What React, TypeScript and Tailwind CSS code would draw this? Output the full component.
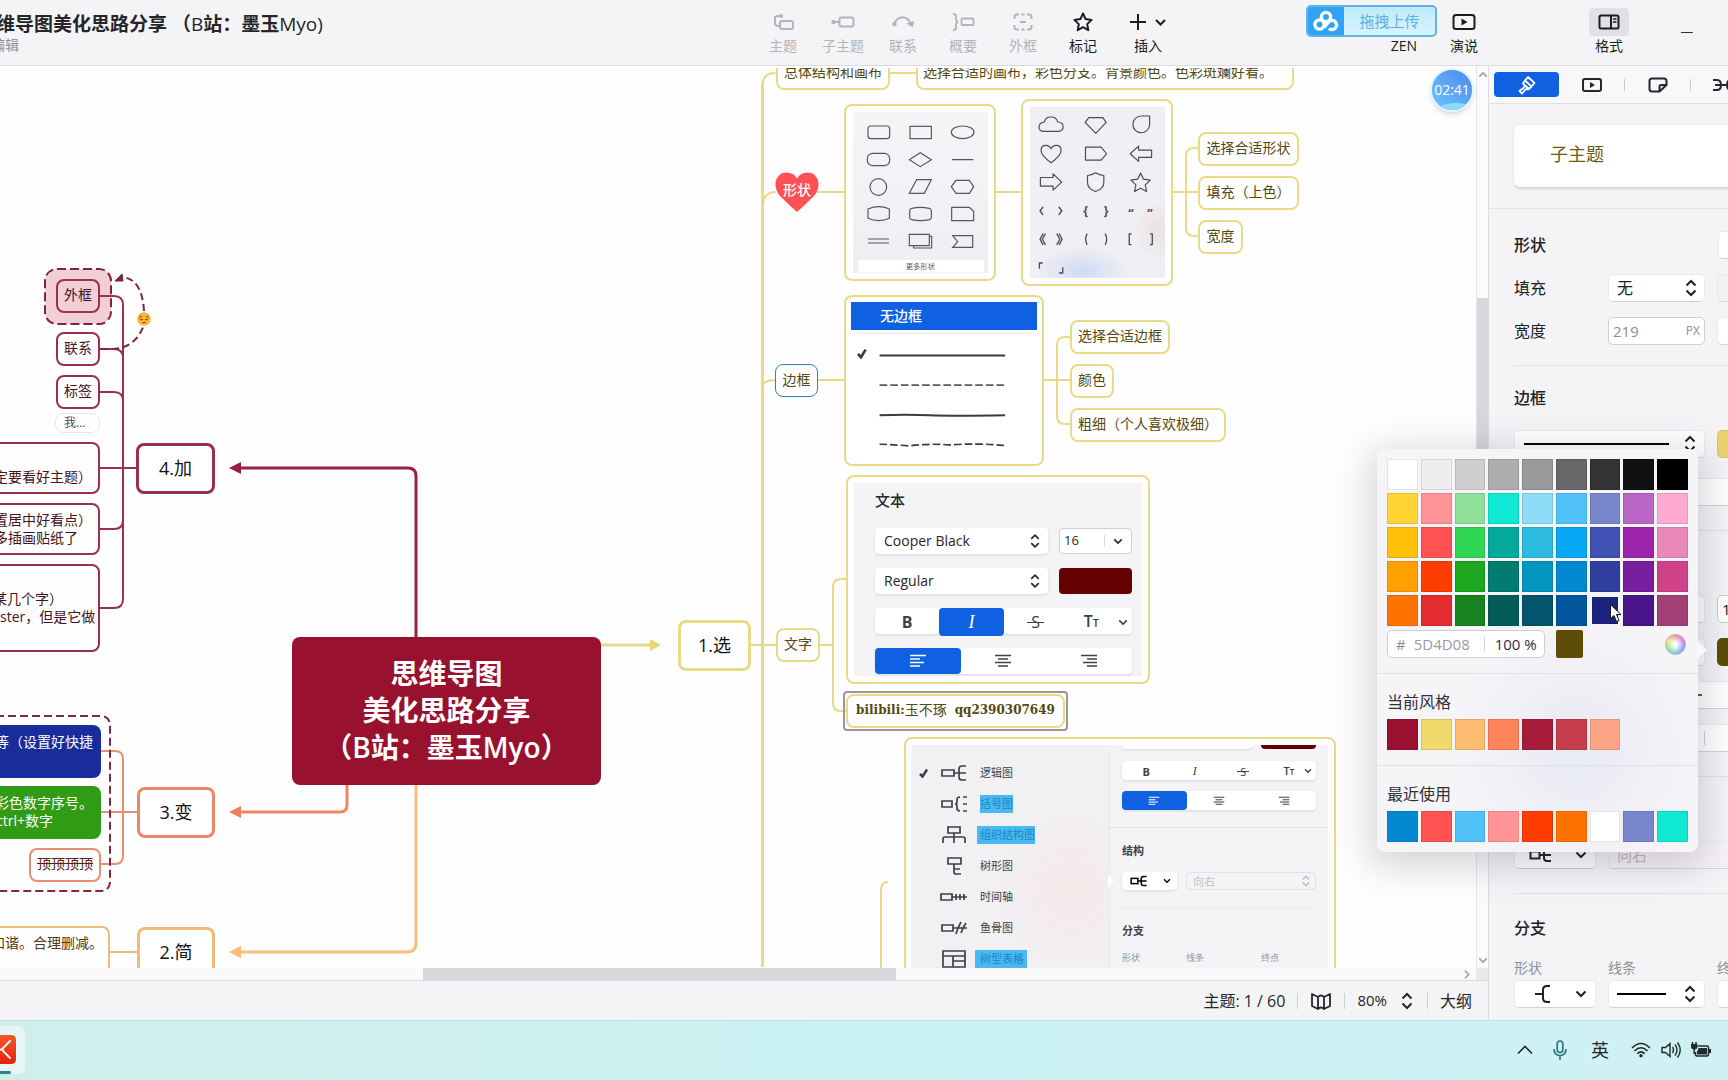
import type { ReactNode } from "react";
import clsx from "clsx";

type Props = {
  className?: string;
  children?: ReactNode;
};

const palette = [
  ["#ffffff", "#eeedf0", "#cfcfcf", "#aeaeae", "#99999b", "#68686a", "#333333", "#111113", "#000000"],
  ["#ffd535", "#ff9496", "#8fde9a", "#0fe8d2", "#8fdcf8", "#50c2f8", "#7a86cb", "#b966c7", "#ffaad3"],
  ["#ffc00a", "#ff5353", "#2fd755", "#02a99c", "#2dbbe0", "#07a8f6", "#3f51b3", "#9d25ae", "#ea89b9"],
  ["#ffa000", "#ff3d00", "#1da81f", "#027c70", "#0396c0", "#0388d2", "#303ea0", "#7a1ea0", "#d04288"],
  ["#ff7200", "#e32c30", "#17841f", "#045c5a", "#03546f", "#02579c", "#1a237e", "#4a148b", "#a43f78"],
];
const themeColors = ["#9a112f", "#f2d96c", "#ffbd72", "#ff8359", "#a61c39", "#c63d4e", "#ffa587"];
const recentColors = ["#0388d2", "#ff5353", "#50c2f8", "#ff9496", "#ff3d00", "#ff7200", "#ffffff", "#7a86cb", "#0fe8d2"];

/* ---------- small icons ---------- */

const Down = ({ className = "w-3 h-2" }: Props) => (
  <svg viewBox="0 0 12 8" className={className} fill="none" stroke="currentColor" strokeWidth="2">
    <path d="M1.5 1.5 6 6l4.5-4.5" />
  </svg>
);

const UpDown = ({ className = "w-3 h-[18px]" }: Props) => (
  <svg viewBox="0 0 12 18" className={className} fill="none" stroke="currentColor" strokeWidth="2">
    <path d="M1.5 6.5 6 2l4.5 4.5M1.5 11.5 6 16l4.5-4.5" />
  </svg>
);

const PlayBox = () => (
  <svg viewBox="0 0 24 18" className="w-6 h-[18px]" fill="none" stroke="currentColor" strokeWidth="2">
    <rect x="1.5" y="2" width="21" height="14" rx="2.5" />
    <path d="M9.5 5.5v7l6-3.5z" fill="currentColor" stroke="none" />
  </svg>
);

const AlignIcon = ({ side, small }: { side: "left" | "center" | "right"; small?: boolean }) => {
  const lines = {
    left: "M1 1.5h16M1 5h10M1 8.500h14M1 12h10",
    center: "M1 1.500h16M4 5h10M1 8.500h16M4 12h10",
    right: "M1 1.500h16M7 5h10M3 8.500h14M7 12h10",
  };
  return (
    <svg viewBox="0 0 18 14" className={small ? "w-3 h-[10px]" : "w-[18px] h-[14px]"} stroke="currentColor" strokeWidth="1.6">
      <path d={lines[side]} />
    </svg>
  );
};

/* logic chart glyph: a box and three branches */
const LogicIcon = ({ className = "w-6 h-4" }: Props) => (
  <svg viewBox="0 0 24 16" className={className} fill="none" stroke="currentColor" strokeWidth="2">
    <rect x="1.500" y="4.500" width="9" height="7" />
    <path d="M10.500 8H22M22 2h-4q-3 0-3 3v6q0 3 3 3h4" />
  </svg>
);

/* ---------- header ---------- */

type ToolProps = {
  label: string;
  muted?: boolean;
  wide?: boolean;
  className?: string;
  children?: ReactNode;
};

const Tool = (props: ToolProps) => (
  <button
    className={clsx(
      "flex flex-col items-center shrink-0 pt-2",
      props.wide ? "w-[70px]" : "w-15",
      props.muted ? "text-[#b4b3b9]" : "text-[#1c1c20]",
      props.className
    )}
  >
    <span className="h-7 flex items-center justify-center">{props.children}</span>
    <span className="text-sm leading-5 h-5">{props.label}</span>
  </button>
);

const toolSvg = "w-6 h-[22px]";

const Header = () => (
  <header className="h-[66px] shrink-0 flex bg-[#f4f4f7] border-b border-[#dddde1] overflow-hidden">
    <div className="flex-1 min-w-0 whitespace-nowrap pt-[11px] -indent-[23px]">
      <h1 className="text-[19px] leading-[26px] font-bold text-[#25252a]">
        思维导图美化思路分享 （<span className="font-medium">B</span>站：墨玉<span className="font-medium">Myo)</span>
      </h1>
      <p className="text-sm leading-4 text-[#8f8f96]">已编辑</p>
    </div>

    <Tool label="主题" muted>
      <svg viewBox="0 0 24 22" className={toolSvg} fill="none" stroke="currentColor" strokeWidth="2">
        <rect x="9" y="10" width="13" height="8" rx="2" />
        <path d="M9 15H7q-3 0-3-3V7q0-2 3-2h2" />
        <circle cx="10" cy="5" r="2" fill="currentColor" stroke="none" />
      </svg>
    </Tool>
    <Tool label="子主题" muted>
      <svg viewBox="0 0 24 22" className={toolSvg} fill="none" stroke="currentColor" strokeWidth="2">
        <rect x="8.500" y="6.500" width="14" height="9" rx="2" />
        <path d="M3 11h6" />
        <circle cx="2.500" cy="11" r="2.200" fill="currentColor" stroke="none" />
      </svg>
    </Tool>
    <Tool label="联系" muted>
      <svg viewBox="0 0 24 22" className={toolSvg} fill="none" stroke="currentColor" strokeWidth="2">
        <path d="M3 13C7 4 16 4 20 13" />
        <circle cx="3.500" cy="13" r="2.200" fill="currentColor" stroke="none" />
        <path d="M15.500 12.500 23 10l-1 6.500z" fill="currentColor" stroke="none" />
      </svg>
    </Tool>
    <Tool label="概要" muted>
      <svg viewBox="0 0 24 22" className={toolSvg} fill="none" stroke="currentColor" strokeWidth="1.8">
        <rect x="10.500" y="7.500" width="12" height="6.500" rx="1" />
        <path d="M2 3q3 0 3 2v3q0 2.500 2 3-2 .5-2 3v3q0 2-3 2" />
      </svg>
    </Tool>
    <Tool label="外框" muted>
      <svg viewBox="0 0 24 22" className={toolSvg} fill="none" stroke="currentColor" strokeWidth="2">
        <path d="M8 3.500H6q-2.500 0-2.500 2.500v2M16 3.500h2q2.500 0 2.500 2.500v2M8 18.500H6Q3.500 18.500 3.500 16v-2M16 18.500h2q2.500 0 2.500-2.500v-2M10.500 3.500h3M10.500 18.500h3M9 11h6" />
      </svg>
    </Tool>
    <Tool label="标记">
      <svg viewBox="0 0 24 22" className={toolSvg} fill="none" stroke="currentColor" strokeWidth="2" strokeLinejoin="round">
        <path d="M12 2.500l2.600 5.600 6 .8-4.400 4.200 1.100 6.100L12 16.200l-5.300 3 1.100-6.100-4.400-4.200 6-.8z" />
      </svg>
    </Tool>
    <Tool label="插入" wide>
      <svg viewBox="0 0 38 20" className="w-[38px] h-5" fill="none" stroke="currentColor" strokeWidth="2">
        <path d="M1 10h16M9 2v16M27 8l4.500 4.500L36 8" />
      </svg>
    </Tool>
    <Tool label="ZEN" className="ml-[191px]" />
    <Tool label="演说">
      <PlayBox />
    </Tool>
    <Tool label="格式" className="ml-[85px]">
      <span className="w-10 h-7 rounded-sm bg-[#e2e0e4] flex items-center justify-center">
        <svg viewBox="0 0 22 16" className="w-[22px] h-4" fill="none" stroke="currentColor" strokeWidth="2">
          <rect x="1.500" y="1.500" width="19" height="13" rx="1.500" />
          <path d="M13 2v12" />
          <path d="M15 5h3.500M15 8h3.500" strokeWidth="1.300" />
        </svg>
      </span>
    </Tool>
    <button aria-label="最小化" className="w-15 ml-[18px] mr-[11px] shrink-0 flex justify-center pt-8">
      <span className="w-3 h-px bg-[#303034]" />
    </button>
  </header>
);

const UploadBadge = () => (
  <button className="absolute right-[291px] top-[5px] h-8 w-[131px] flex rounded-[5px] overflow-hidden border-2 border-[#62b4e4] bg-linear-to-b from-[#bfeafb] to-[#d6f5fe]">
    <span className="w-9 h-full bg-[#2ea3f7] flex items-center justify-center">
      <svg viewBox="0 0 26 22" className="w-[26px] h-[22px]" fill="none" stroke="#fff" strokeWidth="3.4">
        <circle cx="13" cy="7" r="4.600" />
        <circle cx="6.500" cy="14.500" r="4.600" />
        <path d="M16 18.500a4.600 4.600 0 1 0 0-7l-5 6" />
      </svg>
    </span>
    <span className="flex-1 text-center text-[15px] leading-7 text-[#5fb0e8]">拖拽上传</span>
  </button>
);

/* ---------- mind map ---------- */

const Topic = ({ className, children }: Props) => (
  <div
    className={clsx(
      "absolute h-[34px] pb-0.5 flex items-center justify-center rounded-lg border-2 text-sm whitespace-nowrap",
      className
    )}
  >
    {children}
  </div>
);

const gold = "border-[#e9da87] bg-white text-[#55480f]";
const wine = "border-[#98304e] text-[#431420]";

const Links = () => (
  <svg className="absolute left-0 top-0 w-[1476px] h-[970px]" fill="none">
    <g stroke="#e8da86" strokeWidth="2">
      <path d="M762.500 967V84" strokeWidth="3" />
      <path d="M762.500 86q0-13 13-13M890 73h26" />
      <path d="M763 206q0-14 13-14M815 192h30M996 192h26M1173 192h26M1199 148h-5q-8 0-8 8v72q0 8 8 8h5" />
      <path d="M763 386q0-6 13-6M818 380h27M1044 380h26M1070 337h-5q-8 0-8 8v71q0 8 8 8h5" />
      <path d="M751 645h25M820 645h13M846 579h-5q-8 0-8 8v116q0 8 8 8h5" />
      <path d="M881 970v-80q0-8 7-8" />
      <path d="M601 645h50" strokeWidth="3" />
    </g>
    <path d="M650 639l11 6-11 6z" fill="#ead673" />

    <g stroke="#98304e" strokeWidth="2">
      <path d="M100 296h14q9 0 9 9v294q0 9-9 9h-14M100 349h14q9 0 9 9M100 392h14q9 0 9 9M100 529h14q9 0 9-9M100 468h37" />
      <path d="M238 468h170q8 0 8 8v162" strokeWidth="3" stroke="#9c2242" />
    </g>
    <path d="M241 462v12l-12-6z" fill="#9c1e3f" />
    <path d="M101 349h10q24 0 33-24M144 311q-2-34-24-34" stroke="#7d2440" strokeWidth="2" strokeDasharray="7 4" />
    <path d="M115 281l7-7 1 7z" fill="#7d2440" stroke="#7d2440" />

    <path d="M347 785v20q0 7-7 7H240" stroke="#ee8563" strokeWidth="3" />
    <path d="M241 806v12l-12-6z" fill="#ee8060" />
    <path d="M101 751h14q8 0 8 8v97q0 8-8 8h-14M101 812h36" stroke="#ea8e70" strokeWidth="2" />

    <path d="M416 785v158q0 9-9 9H240" stroke="#f8bf7c" strokeWidth="3" />
    <path d="M241 946v12l-12-6z" fill="#fcbc72" />
    <path d="M110 952h27" stroke="#edba80" strokeWidth="2" />

    <rect x="45" y="269" width="66" height="55" rx="12" fill="#f2ced7" stroke="#7d2440" strokeWidth="2" strokeDasharray="9 4" />
    <path d="M100 296h12" stroke="#98304e" strokeWidth="2" />
    <path d="M-4 716h104q10 0 10 10v155q0 10-10 10H-4" stroke="#84264a" strokeWidth="2" strokeDasharray="8 4" />
  </svg>
);

const ShapeBoard = () => (
  <div className="absolute left-[844px] top-[104px] w-[152px] h-[177px] rounded-lg border-2 border-[#e9da87] bg-white flex items-center justify-center">
    <svg viewBox="339 336 405 483" className="w-[135px] h-[161px] bg-linear-to-b from-[#f5f4f7] to-[#efeef2]" fill="none" stroke="#55555b" strokeWidth="3.500">
      <rect x="384" y="378" width="65" height="38" rx="9" />
      <rect x="510" y="379" width="64" height="37" />
      <ellipse cx="668" cy="397" rx="34" ry="19" />
      <rect x="382" y="460" width="67" height="37" rx="16" />
      <path d="M508 479l33-21 33 21-33 21zM636 479h64" />
      <circle cx="415" cy="561" r="25" />
      <path d="M508 580l22-41h44l-21 41zM634 560l14-19h40l13 19-13 20h-40z" />
      <path d="M384 627q32-14 64 0v28q-32 14-64 0z" />
      <path d="M515 625q26-6 53 0 6 1 6 7v20q0 6-6 7-27 6-53 0-6-1-6-7v-20q0-6 6-7z" />
      <path d="M635 622h53l13 12v28h-66z" />
      <path d="M384 717h63M384 729h63" />
      <path d="M508 703h60v34h-60zM568 709h7v35h-54v-7" />
      <path d="M638 707h60v35h-60l15-17z" />
      <rect x="355" y="780" width="378" height="36" rx="6" fill="#fff" stroke="none" />
      <text x="541" y="806" textAnchor="middle" fontSize="22" fill="#55555b" stroke="none">更多形状</text>
    </svg>
  </div>
);

const BracketBoard = () => (
  <div className="absolute left-[1021px] top-[99px] w-[152px] h-[187px] rounded-lg border-2 border-[#e9da87] bg-white flex items-center justify-center">
    <svg viewBox="871 320 404 512" className="w-[135px] h-[171px]" fill="none" stroke="#4b4b51" strokeWidth="3.500" strokeLinejoin="round">
      <defs>
        <radialGradient id="haze">
          <stop offset="0" stopColor="#cfdcf3" />
          <stop offset="1" stopColor="#cfdcf3" stopOpacity="0" />
        </radialGradient>
        <radialGradient id="warm">
          <stop offset="0" stopColor="#e9e0e3" />
          <stop offset="1" stopColor="#e9e0e3" stopOpacity="0" />
        </radialGradient>
      </defs>
      <rect x="868" y="318" width="410" height="518" fill="#f0eff3" stroke="none" />
      <ellipse cx="1030" cy="810" rx="140" ry="70" fill="url(#haze)" stroke="none" />
      <ellipse cx="1260" cy="690" rx="80" ry="90" fill="url(#warm)" stroke="none" />
      <path d="M910 393q-12-1-12-13 0-13 16-15 3-15 20-15 16 0 20 15 16 1 16 14 0 13-14 14z" />
      <path d="M1047 352h42l10 14-31 33-32-33z" />
      <path d="M1229 347v27a25 25 0 1 1-25-27z" />
      <path d="M934 487q-30-22-30-36 0-16 14-16 11 0 16 10 5-10 16-10 14 0 14 16 0 14-30 36z" />
      <path d="M1037 440h47l16 20-16 19h-47z" />
      <path d="M1171 460l25-23v12h39v22h-39v12z" />
      <path d="M902 531h38v-11l26 25-26 24v-12h-38z" />
      <path d="M1067 517q12 7 25 8v20q0 20-25 28-24-8-24-28v-20q12-1 24-8z" />
      <path d="M1202 518l9 18 20 3-15 14 4 20-18-10-18 10 4-20-15-14 20-3z" />
      <path d="M910 619l-9 12 9 12M957 619l9 12-9 12" strokeWidth="4.500" />
      <path d="M910 699l-9 17 9 17M917 699l-9 17 9 17M951 699l9 17-9 17M958 699l9 17-9 17" strokeWidth="4" />
      <path d="M1042 699q-9 17 0 34M1096 699q9 17 0 34" strokeWidth="4" />
      <path d="M1175 700h-7v32h7M1230 700h7v32h-7" strokeWidth="4" />
      <path d="M899 804v-17h10M969 800v17h-11" strokeWidth="4" />
      <g fontSize="36" fontWeight="700" fill="#4b4b51" stroke="none">
        <text x="1030" y="642">{"{"}</text>
        <text x="1092" y="642">{"}"}</text>
        <text x="1165" y="651">“</text>
        <text x="1222" y="651">”</text>
      </g>
    </svg>
  </div>
);

const BorderBoard = () => (
  <div className="absolute left-[844px] top-[295px] w-[200px] h-[171px] p-[5px] rounded-lg border-2 border-[#e9da87] bg-white">
    <div className="h-7 bg-[#1061e1] text-white text-sm font-medium leading-7 pl-[29px]">无边框</div>
    <svg viewBox="334 152 560 384" className="w-full" fill="none" stroke="#3a3a40" strokeWidth="6">
      <path d="M336 162h548" stroke="#e6e6ea" strokeWidth="3" />
      <path d="M355 224l9 10 14-23" strokeWidth="8" />
      <path d="M420 229h378" />
      <path d="M420 318h378" strokeDasharray="23 9" strokeWidth="5" stroke="#5a5a60" />
      <path d="M420 409q80-3 150 0t228 0" />
      <path d="M420 496q40 1 90 5 60-8 120-3 90-6 168 2" strokeDasharray="23 9" strokeWidth="5" />
    </svg>
  </div>
);

/* text style buttons, in the two sizes that the map's pictures use */
const StyleRow = ({ small, italic }: { small?: boolean; italic?: boolean }) => (
  <div
    className={clsx(
      "grid grid-cols-4 bg-white rounded-sm shadow-sm text-[#3f3f45]",
      small ? "h-[19px] text-[11px] leading-[19px]" : "h-[26px] text-base leading-[26px]"
    )}
  >
    <button className="font-bold">B</button>
    <button
      className={clsx(
        "italic [font-family:'Liberation_Serif',serif] rounded-sm",
        small ? "text-xs" : "text-lg",
        italic && "bg-[#1061e1] text-white"
      )}
    >
      I
    </button>
    <button aria-label="删除线" className="flex items-center justify-center">
      <span className="relative">
        S
        <span className={clsx("absolute top-1/2 h-px bg-current", small ? "-inset-x-[3px]" : "-inset-x-1")} />
      </span>
    </button>
    <button className="flex items-center justify-between pl-4 pr-1 font-semibold">
      <span>
        T<span className={small ? "text-[8px]" : "text-[11px]"}>T</span>
      </span>
      <Down className={small ? "w-2 h-[6px]" : "w-[10px] h-[7px]"} />
    </button>
  </div>
);

const AlignRow = ({ small }: { small?: boolean }) => (
  <div className={clsx("grid grid-cols-3 bg-white rounded-sm shadow-sm text-[#3f3f45]", small ? "h-[19px]" : "h-[26px]")}>
    <button aria-label="左对齐" className="rounded-sm bg-[#1061e1] text-white flex items-center justify-center">
      <AlignIcon side="left" small={small} />
    </button>
    <button aria-label="居中" className="flex items-center justify-center">
      <AlignIcon side="center" small={small} />
    </button>
    <button aria-label="右对齐" className="flex items-center justify-center">
      <AlignIcon side="right" small={small} />
    </button>
  </div>
);

const FontSelect = ({ label, value }: { label: string; value: string }) => (
  <div className="relative w-[173px] text-[#26262b]">
    <select aria-label={label} className="appearance-none w-full h-[26px] rounded-sm bg-white shadow-sm pl-[9px] text-sm">
      <option>{value}</option>
    </select>
    <UpDown className="w-[10px] h-4 absolute right-2 top-[5px] pointer-events-none" />
  </div>
);

const TextBoard = () => (
  <div className="absolute left-[846px] top-[475px] w-[304px] h-[209px] p-1.5 rounded-lg border-2 border-[#e9da87] bg-white">
    <div className="h-full bg-[#f4f4f7] pt-[5px] pl-[21px] pr-[10px] flex flex-col gap-3.5">
      <p className="text-[15px] leading-6 mb-0.5 font-medium text-[#26262b]">文本</p>
      <div className="flex justify-between">
        <FontSelect label="字体" value="Cooper Black" />
        <div className="w-[73px] h-[26px] rounded-sm bg-white border border-[#cfced4] flex items-center pr-2 text-[#26262b]">
          <input aria-label="字号" defaultValue="16" className="w-10 pl-1 text-[13px]" />
          <span className="w-px h-3 bg-[#d8d8dc] ml-1 mr-2" />
          <Down className="w-[10px] h-[7px]" />
        </div>
      </div>
      <div className="flex justify-between">
        <FontSelect label="字重" value="Regular" />
        <button aria-label="文字颜色" className="w-[73px] h-[26px] rounded-sm bg-[#660000]" />
      </div>
      <StyleRow italic />
      <AlignRow />
    </div>
  </div>
);

/* the seven structure glyphs, each in a 28 x 20 box */
const structures = [
  { name: "逻辑图", d: "M2 7h12v6H2zM14 10h12M26 3h-4q-3 0-3 3v8q0 3 3 3h4" },
  { name: "括号图", d: "M2 7h10v6H2zM20 3q-3 0-3 3v2q0 2-2 2 2 0 2 2v2q0 3 3 3M23 3h4M23 10h4M23 17h4", mark: "bg-[#48b9f1] text-[#1c86c6]" },
  { name: "组织结构图", d: "M8 2h12v6H8zM14 8v10M3 18v-4q0-2 2-2h18q2 0 2 2v4", mark: "bg-[#48b9f1] text-[#1c86c6] -ml-[3px] pl-[3px]" },
  { name: "树形图", d: "M8 2h13v6H8zM14 8v8q0 2 2 2h5M14 13h6" },
  { name: "时间轴", d: "M1 7h11v6H1zM12 10h15M16 7v6M20 7v6M24 7v6" },
  { name: "鱼骨图", d: "M2 7h11v6H2zM13 10h14M21 4l-3 6-2 6M26 5l-3 5-2 5" },
  { name: "树型表格", d: "M3 2h22v16H3zM3 7h22M13 7v11M13 12h12", mark: "bg-[#48b9f1] text-[#1c86c6] -ml-[5px] pl-[5px] pr-[3px]" },
];

const StructureBoard = () => (
  <div className="absolute left-[904px] top-[737px] w-[432px] h-[260px] p-1.5 rounded-lg border-2 border-[#e9da87] bg-white">
    <div className="h-full flex bg-[#f4f4f7] text-[#3f3f45]">
      <ul className="relative w-[196px] shrink-0 pt-3 bg-[radial-gradient(circle_at_160px_145px,#f6e9ea,#f1f0f3_80px)] shadow-md">
        {structures.map((s, i) => (
          <li key={s.name} className="h-[31px] flex items-center pl-[7px] text-[11px]">
            <svg viewBox="0 0 10 10" className="w-[10px] h-[10px] mr-[11px]" fill="none" stroke="currentColor" strokeWidth="2.500">
              {i === 0 && <path d="M1 6l2.500 2.500L8 1.500" />}
            </svg>
            <svg viewBox="0 0 28 20" className="w-7 h-5 mr-3" fill="none" stroke="currentColor" strokeWidth="1.700">
              <path d={s.d} />
            </svg>
            <span className={clsx("leading-[18px]", s.mark)}>{s.name}</span>
          </li>
        ))}
        <svg viewBox="0 0 6 14" className="absolute -right-1.5 top-[129px] w-1.5 h-[14px]">
          <path d="M0 0l6 7-6 7z" fill="#fff" />
        </svg>
      </ul>
      <div className="flex-1 pl-[14px] pr-3">
        <div className="flex justify-between h-1 mb-3">
          <span className="w-[130px] bg-white rounded-b-sm shadow-sm" />
          <span className="w-[55px] bg-[#660000] rounded-b-sm" />
        </div>
        <StyleRow small />
        <div className="h-[11px]" />
        <AlignRow small />
        <hr className="mt-[17px] -ml-[14px] -mr-3 border-[#e6e5e9]" />
        <p className="mt-3.5 text-[11px] leading-[18px] font-bold">结构</p>
        <div className="mt-3 flex justify-between">
          <button aria-label="结构" className="w-[55px] h-[18px] rounded-sm bg-white shadow-sm flex items-center justify-between pl-2 pr-1.5 text-black">
            <LogicIcon className="w-[18px] h-3" />
            <Down className="w-2 h-[6px]" />
          </button>
          <div className="relative">
            <select aria-label="方向" className="appearance-none block w-[130px] h-[18px] rounded-sm border border-[#e2dfe5] bg-[#f6f3f7] pl-1.5 text-[11px] leading-none text-[#c4c2c8]">
              <option>向右</option>
            </select>
            <UpDown className="absolute right-1.5 top-[3px] w-2 h-3 text-[#b4b2b8] pointer-events-none" />
          </div>
        </div>
        <hr className="mt-[17px] border-[#e9e8ec]" />
        <p className="mt-3.5 text-[11px] leading-[18px] font-bold">分支</p>
        <div className="mt-[10px] flex text-[9px] leading-4 text-[#96969c]">
          <span className="w-[64px]">形状</span>
          <span className="w-[75px]">线条</span>
          <span>终点</span>
        </div>
      </div>
    </div>
  </div>
);

const MindMap = () => (
  <div className="absolute left-0 -top-[68px]">
    <Links />

    {/* 4.加 */}
    <Topic className={clsx(wine, "left-[56px] top-[279px] w-11")}>外框</Topic>
    <Topic className={clsx(wine, "left-[56px] top-[332px] w-11")}>联系</Topic>
    <Topic className={clsx(wine, "left-[56px] top-[375px] w-11")}>标签</Topic>
    <span className="absolute left-[55px] top-[413px] w-[45px] h-5 rounded-lg border border-[#e8e8ea] pl-2 text-xs leading-[18px] text-[#4b4b50]">
      我...
    </span>
    <div className={clsx(wine, "absolute -left-20 top-[442px] w-[180px] h-[52px] rounded-lg border-2 pl-[72px] pt-[24px] text-sm leading-[18px] whitespace-nowrap")}>
      定要看好主题）
    </div>
    <div className={clsx(wine, "absolute -left-20 top-[503px] w-[180px] h-[52px] rounded-lg border-2 pl-[72px] pt-[6px] text-sm leading-[18px] whitespace-nowrap")}>
      置居中好看点）
      <br />
      多插画贴纸了
    </div>
    <div className={clsx(wine, "absolute -left-20 top-[564px] w-[180px] h-[88px] rounded-lg border-2 pl-[71px] pt-[24px] text-sm leading-[18px] whitespace-nowrap")}>
      某几个字）
      <p className="pl-[7px]">ster，但是它做</p>
    </div>
    <div className="absolute left-[136px] top-[443px] w-[79px] h-[51px] pb-0.5 rounded-lg border-3 border-[#98304e] bg-white text-lg flex items-center justify-center">4.加</div>
    <svg viewBox="0 0 14 14" className="absolute left-[137px] top-[312px] w-[14px] h-[14px]" fill="none" stroke="#6b3a10">
      <circle cx="7" cy="7" r="6.800" fill="#fbb534" stroke="none" />
      <path d="M2.500 5.500 5 4M11.500 5.500 9 4M3 7q1.500 1.500 3 0M8 7q1.500 1.500 3 0M5.500 10.500h3" />
    </svg>

    {/* 3.变 */}
    <div className="absolute -left-20 top-[725px] w-[181px] h-[53px] rounded-lg bg-[#182c9c] text-white text-sm leading-[18px] pl-[75px] pt-2 whitespace-nowrap">
      等（设置好快捷
    </div>
    <div className="absolute -left-20 top-[786px] w-[181px] h-[53px] rounded-lg bg-[#309b14] text-white text-sm leading-[18px] pl-[75px] pt-2 whitespace-nowrap">
      彩色数字序号。
      <p className="pl-px">ctrl+数字</p>
    </div>
    <Topic className="left-[29px] top-[848px] w-[72px] border-[#ea8e70] text-[#5a2412] line-through">顶顶顶顶</Topic>
    <div className="absolute left-[137px] top-[787px] w-[78px] h-[51px] pb-0.5 rounded-lg border-3 border-[#ea8867] bg-white text-lg flex items-center justify-center">3.变</div>

    {/* 2.简 */}
    <div className="absolute -left-20 top-[926px] w-[190px] h-[52px] rounded-lg border-2 border-[#edba80] text-[#55380f] text-sm leading-[18px] pl-[69px] pt-[6px] whitespace-nowrap">
      和谐。合理删减。
    </div>
    <div className="absolute left-[137px] top-[927px] w-[78px] h-[51px] pb-0.5 rounded-lg border-3 border-[#f2ba78] bg-white text-lg flex items-center justify-center">2.简</div>

    {/* root topic */}
    <div className="absolute left-[292px] top-[637px] w-[309px] h-[148px] pb-0.5 rounded-lg bg-[#98112f] text-white text-[28px] leading-[37px] font-bold flex flex-col items-center justify-center whitespace-nowrap">
      <span>思维导图</span>
      <span>美化思路分享</span>
      <span>
        （<span className="font-semibold">B</span>站：墨玉<span className="font-semibold">Myo</span>）
      </span>
    </div>

    {/* 1.选 */}
    <div className="absolute left-[678px] top-[620px] w-[73px] h-[51px] pb-0.5 rounded-lg border-3 border-[#e9da87] bg-white text-lg flex items-center justify-center">1.选</div>
    <Topic className={clsx(gold, "left-[776px] top-[56px] w-[114px]")}>总体结构和画布</Topic>
    <Topic className={clsx(gold, "left-[916px] top-[56px] w-[378px] pr-[14px]")}>
      选择合适的画布，彩色分支。背景颜色。色彩斑斓好看。
    </Topic>

    <div className="absolute left-[775px] top-[171px] w-11 h-[42px] flex items-center justify-center text-white text-sm font-medium">
      <svg viewBox="0 0 44 42" className="absolute inset-0 w-11 h-[42px]">
        <path d="M22 41Q14 34 5 25 0 19 .5 12 2 2 11 1.500q8 0 11 6 3-6 11-6 9 .5 10.500 10.500.5 7-4.500 13-9 9-17 16z" fill="#ff5153" />
      </svg>
      <span className="relative pb-1">形状</span>
    </div>
    <ShapeBoard />
    <BracketBoard />
    <Topic className={clsx(gold, "left-[1198px] top-[132px] w-[101px]")}>选择合适形状</Topic>
    <Topic className={clsx(gold, "left-[1198px] top-[176px] w-[101px]")}>填充（上色）</Topic>
    <Topic className={clsx(gold, "left-[1198px] top-[220px] w-[45px]")}>宽度</Topic>

    <div className="absolute left-[775px] top-[364px] w-[43px] h-[33px] pb-0.5 rounded-lg border border-[#2a86b8] bg-white text-[#55480f] text-sm flex items-center justify-center">
      边框
    </div>
    <BorderBoard />
    <Topic className={clsx(gold, "left-[1070px] top-[320px] w-[100px]")}>选择合适边框</Topic>
    <Topic className={clsx(gold, "left-[1070px] top-[364px] w-11")}>颜色</Topic>
    <Topic className={clsx(gold, "left-[1070px] top-[408px] w-[156px]")}>粗细（个人喜欢极细）</Topic>

    <Topic className={clsx(gold, "left-[776px] top-[628px] w-11")}>文字</Topic>
    <TextBoard />
    <div className="absolute left-[843px] top-[691px] w-[225px] h-10 rounded-sm border-2 border-[#9b949c]" />
    <Topic className={clsx(gold, "left-[846px] top-[694px] w-[219px]")}>
      <b className="text-xs [font-family:'DejaVu_Serif',serif]">bilibili:</b>
      玉不琢
      <b className="ml-2 text-xs [font-family:'DejaVu_Serif',serif]">qq2390307649</b>
    </Topic>
    <StructureBoard />
  </div>
);

const Timer = () => (
  <div className="absolute right-0.5 top-0.5 size-11 rounded-full border-2 border-[#dff6fe] bg-linear-to-tr from-[#6cc6fb] to-[#4f86ef] shadow-md overflow-hidden flex items-center justify-center text-white text-sm">
    <span className="absolute -bottom-[17px] left-0 w-12 h-6 rounded-[50%] bg-[#8edcfb]" />
    <span className="relative">02:41</span>
  </div>
);

const StatusBar = () => (
  <footer className="h-10 shrink-0 flex items-center justify-end pr-4 bg-[#f4f4f6] border-t border-[#dddbe0] text-[15px] text-[#26262b]">
    <span className="text-base">主题: 1 / 60</span>
    <span className="w-px h-4 bg-[#cfced3] mx-3" />
    <button aria-label="导航图">
      <svg viewBox="0 0 22 18" className="w-[22px] h-[18px]" fill="none" stroke="currentColor" strokeWidth="1.800" strokeLinejoin="round">
        <path d="M2 2l6 3q3-3 6 0l6-3v12l-6 3q-3-3-6 0l-6-3zM8 5v12M14 5v12" />
      </svg>
    </button>
    <span className="w-px h-4 bg-[#cfced3] mx-3" />
    <button className="flex items-center gap-3.5">
      80% <UpDown />
    </button>
    <span className="w-px h-4 bg-[#cfced3] ml-3.5 mr-3" />
    <button className="text-base">大纲</button>
  </footer>
);

const Workspace = () => (
  <main className="flex-1 min-w-0 flex flex-col bg-white">
    <div className="flex-1 min-h-0 flex">
      <div className="flex-1 min-w-0 pt-0.5 relative">
        <div className="relative h-full overflow-hidden bg-[#fefefe]">
          <MindMap />
        </div>
        <Timer />
      </div>
      <div className="w-3 shrink-0 flex flex-col items-center bg-[#fbfafc] border-l border-[#e6e4e8] text-[#a3a2a8] pt-[5px] pb-1">
        <Down className="w-[10px] h-[7px] rotate-180" />
        <div className="flex-1 min-h-0 w-full pt-[220px] pb-40">
          <div className="h-full bg-[#d8d6da]" />
        </div>
        <Down className="w-[10px] h-[7px]" />
      </div>
    </div>
    <div className="h-3 shrink-0 flex items-center bg-[#faf9fc] text-[#a3a2a8]">
      <div className="flex-1 h-full pl-[423px]">
        <div className="h-full w-[473px] bg-[#d9d7db]" />
      </div>
      <Down className="w-[10px] h-[7px] -rotate-90 mr-1" />
      <span className="w-3 h-full bg-[#e9e8eb]" />
    </div>
    <StatusBar />
  </main>
);

/* ---------- format panel ---------- */

const field = "h-7 shrink-0 rounded-[5px] bg-white border border-[#ebe9ee] border-b-[#d3d1d8] flex items-center";

const Section = ({ className, children }: Props) => (
  <section className={clsx("ml-[25px] pt-5 pb-6 border-b border-[#e2e1e6] flex flex-col", className)}>{children}</section>
);

const Title = ({ children }: Props) => <h2 className="h-6 leading-6 mb-5 text-base font-medium text-[#202024]">{children}</h2>;

const tab = "w-[65px] h-[25px] shrink-0 flex items-center justify-center text-[#26262b]";

const FormatPanel = () => (
  <aside className="w-60 shrink-0 overflow-hidden bg-[#f4f4f7] border-l border-[#dcdbe0] text-base text-[#202024]">
    <div className="w-[330px]">
      <nav className="h-[38px] flex items-center pl-[5px] bg-[#f8f7fa] border-b border-[#dfdee3]">
        <button aria-label="样式" className={clsx(tab, "rounded-[4px] bg-[#1061e0]")}>
          <svg viewBox="0 0 20 20" className="w-5 h-5" fill="none" stroke="#fff" strokeWidth="1.800" strokeLinejoin="round">
            <path d="M11 2l6.500 6-3 3.500L8 5.500zM8 5.500l-2 3 6 5.500 2.500-2.500M6 8.500l1.500 2q.5 1.500-1 2.500l-4 3 2.500 2.500 3.500-4q1-1 2.500 0l1-.5" />
          </svg>
        </button>
        <button aria-label="演说" className={tab}>
          <svg viewBox="0 0 20 16" className="w-5 h-4" fill="none" stroke="currentColor" strokeWidth="2">
            <rect x="1" y="2" width="18" height="12" rx="2" />
            <path d="M8 5v6l5-3z" fill="currentColor" stroke="none" />
          </svg>
        </button>
        <span className="w-px h-3 bg-[#c9c8cd]" />
        <button aria-label="画布" className={tab}>
          <svg viewBox="0 0 20 16" className="w-5 h-4" fill="none" stroke="currentColor" strokeWidth="2">
            <path d="M11.500 14.500H4q-2.500 0-2.500-2.500V4Q1.500 1.500 4 1.500h12q2.500 0 2.500 2.500v4zM11.500 14.500V10q0-2 2-2h5" />
          </svg>
        </button>
        <span className="w-px h-3 bg-[#c9c8cd]" />
        <button aria-label="连接" className={tab}>
          <svg viewBox="0 0 24 16" className="w-6 h-4" fill="none" stroke="currentColor" strokeWidth="2">
            <path d="M1 3h4q4 0 4 5t-4 5H1M3 8h18M23 3h-4q-4 0-4 5t4 5h4" />
          </svg>
        </button>
      </nav>

      <div className="pt-[21px] pb-5 pl-[25px] border-b border-[#e2e1e6]">
        <div className="h-[63px] rounded-md bg-white border-b border-[#d3d5de] shadow-sm pl-9 leading-[58px] text-[18px] text-[#6b5b16]">子主题</div>
      </div>

      <Section className="gap-[15px] pt-[22px]! pb-5!">
        <div className="flex h-7 items-center justify-between">
          <h2 className="w-[204px] text-base font-medium">形状</h2>
          <button aria-label="选择形状" className={clsx(field, "flex-1!")} />
        </div>
        <div className="flex items-center">
          <label htmlFor="fill" className="w-[94px]">填充</label>
          <div className="relative mr-3">
            <select id="fill" className={clsx(field, "appearance-none w-[97px] pl-2 text-base")}>
              <option>无</option>
            </select>
            <UpDown className="w-3 h-[18px] absolute right-2 top-[5px] pointer-events-none" />
          </div>
          <button aria-label="填充颜色" className={clsx(field, "w-16 bg-[#f3f0f4]!")} />
        </div>
        <div className="flex items-center">
          <label htmlFor="width" className="w-[94px]">宽度</label>
          <div className={clsx(field, "w-[97px] mr-3 px-1 border-[#cfced4]! text-[15px] text-[#8d8d93]")}>
            <input id="width" defaultValue="219" className="w-full min-w-0" />
            <span className="text-xs">PX</span>
          </div>
          <button aria-label="锁定宽度" className={clsx(field, "w-16")} />
        </div>
      </Section>

      <Section>
        <Title>边框</Title>
        <div className="flex gap-3">
          <button aria-label="边框线条" className={clsx(field, "w-[191px] justify-between pl-[9px] pr-2")}>
            <span className="w-[145px] h-0.5 bg-black" />
            <UpDown />
          </button>
          <button aria-label="边框颜色" className="w-16 h-7 rounded-[5px] bg-[#ead470] border border-[#d8c468]" />
        </div>
        <button aria-label="边框粗细" className={clsx(field, "mt-5")} />
      </Section>

      <Section className="gap-[15px]">
        <h2 className="h-6 mb-[5px] font-medium">文本</h2>
        <div className="flex gap-3">
          <button aria-label="字体" className={clsx(field, "w-[191px]")} />
          <input aria-label="字号" defaultValue="14" className={clsx(field, "w-16 border-[#c9c8ce]! pl-1 text-[15px]")} />
        </div>
        <div className="flex gap-3">
          <button aria-label="字重" className={clsx(field, "w-[191px]")} />
          <button aria-label="文字颜色" className="w-16 h-7 rounded-[5px] bg-[#5d4d08]" />
        </div>
        <button aria-label="删除线" className={clsx(field, "pl-[181px]")}>
          <span className="w-1.5 h-0.5 bg-[#55555b]" />
        </button>
        <button aria-label="对齐" className={clsx(field, "pl-[189px]")}>
          <span className="w-px h-3.5 bg-[#cfced3]" />
        </button>
      </Section>

      <Section>
        <Title>结构</Title>
        <div className="flex gap-3">
          <button aria-label="结构" className={clsx(field, "w-[82px] justify-between pl-[14px] pr-2")}>
            <LogicIcon />
            <Down />
          </button>
          <select aria-label="方向" className={clsx(field, "appearance-none flex-1 bg-[#f6f3f7]! pl-2 text-[15px] text-[#b9b8be]")}>
            <option>向右</option>
          </select>
        </div>
      </Section>

      <Section className="border-b-0 pt-[22px]!">
        <Title>分支</Title>
        <div className="flex gap-3 text-sm leading-4 text-[#8f8f95]">
          <span className="w-[82px]">形状</span>
          <span className="w-[97px]">线条</span>
          <span>终点</span>
        </div>
        <div className="flex gap-3 mt-1">
          <button aria-label="分支形状" className={clsx(field, "w-[82px] justify-between pl-5 pr-2")}>
            <svg viewBox="0 0 16 20" className="w-4 h-5" fill="none" stroke="currentColor" strokeWidth="2">
              <path d="M0 10h8M15 2h-3q-4 0-4 4v8q0 4 4 4h3" />
            </svg>
            <Down />
          </button>
          <button aria-label="分支线条" className={clsx(field, "w-[97px] justify-between pl-2 pr-2")}>
            <span className="w-[49px] h-0.5 bg-black" />
            <UpDown />
          </button>
          <button aria-label="分支终点" className={clsx(field, "w-16")} />
        </div>
      </Section>
    </div>
  </aside>
);

/* ---------- colour picker ---------- */

const Swatches = ({ colors, active }: { colors: string[]; active?: string }) => (
  <div className="grid grid-cols-9 gap-[3px]">
    {colors.map((color) => (
      <button
        key={color}
        aria-label={color}
        className={clsx("h-[31px] border border-black/10", color === active && "m-0.5 h-[27px]!")}
        style={{ backgroundColor: color }}
      />
    ))}
  </div>
);

const ColorPicker = () => (
  <div className="absolute right-[30px] top-[449px] w-[321px] rounded-lg bg-[radial-gradient(circle_at_200px_300px,#e9ebf3,#f5f4f7_130px)] shadow-[0_8px_36px_6px_rgba(60,50,70,0.22)] text-base text-[#303036]">
    <div className="px-[10px] pt-[10px] pb-[15px] border-b border-[#e2e0e6]">
      <Swatches colors={palette.flat()} active="#1a237e" />
      <div className="mt-1 flex items-center">
        <div className="w-[158px] h-7 rounded-[5px] bg-white border border-[#cfcdd4] flex items-center pl-2 text-[15px]">
          <label htmlFor="hex" className="text-[#8d8d93] mr-2">#</label>
          <input id="hex" defaultValue="5D4D08" className="w-[62px] text-[#9a9aa0]" />
          <span className="w-px h-3.5 bg-[#cfced3] ml-2 mr-2.5" />
          <input aria-label="不透明度" defaultValue="100 %" className="w-12" />
        </div>
        <span className="ml-[11px] w-[27px] h-7 rounded-xs bg-[#5d4d08]" />
        <button
          aria-label="更多颜色"
          className="ml-auto mr-0.5 size-[21px] rounded-full border border-[#c9a8c0] bg-[radial-gradient(circle,#ffffff_10%,transparent_75%),conic-gradient(#f08080,#c070e8,#6a8cf0,#58d0d8,#7be07a,#e8e060,#f08080)]"
        />
      </div>
    </div>
    <div className="px-[10px] pt-4 pb-[15px] border-b border-[#e2e0e6]">
      <p className="leading-6 mb-[5px]">当前风格</p>
      <Swatches colors={themeColors} />
    </div>
    <div className="px-[10px] pt-4 pb-[10px]">
      <p className="leading-6 mb-[5px]">最近使用</p>
      <Swatches colors={recentColors} />
    </div>
    <svg viewBox="0 0 10 22" className="absolute -right-[9px] top-[190px] w-[10px] h-[22px]">
      <path d="M0 0q2 5 10 11-8 6-10 11z" fill="#f8f7fa" />
    </svg>
    <svg viewBox="0 0 14 20" className="absolute right-[75px] top-[154px] w-[14px] h-5">
      <path d="M1.500 1.500v14l3.500-3 2.500 6 2.500-1-2.500-6H12z" fill="#fff" stroke="#1a1a1a" />
    </svg>
  </div>
);

/* ---------- taskbar ---------- */

const Taskbar = () => (
  <div className="h-15 shrink-0 flex items-center justify-between pr-[17px] pb-0.5 bg-linear-to-r from-[#cfeeea] via-[#cbf3f4] to-[#cff1f4] border-t border-[#c4dfe1] text-[#1f2a2e]">
    <button aria-label="XMind" className="w-[25px] h-12 rounded-r-md bg-[#e5f6f5] flex flex-col justify-between pt-[9px]">
      <svg viewBox="0 0 16 29" className="w-4 h-[29px]">
        <defs>
          <linearGradient id="app" x2="0" y2="1">
            <stop offset="0" stopColor="#f4572a" />
            <stop offset="1" stopColor="#e8220c" />
          </linearGradient>
        </defs>
        <path d="M0 0h11q5 0 5 5v19q0 5-5 5H0z" fill="url(#app)" />
        <path d="M10 6 3 13q-1 1.500 0 3l7 7M0 14.500h3" fill="none" stroke="#fff" strokeWidth="1.800" strokeLinecap="round" />
      </svg>
      <span className="w-[11px] h-[3px] rounded-r-full bg-[#2d7f92]" />
    </button>
    <div className="flex items-center">
      <button aria-label="显示隐藏的图标" className="mr-5">
        <svg viewBox="0 0 16 10" className="w-4 h-[10px]" fill="none" stroke="currentColor" strokeWidth="1.600">
          <path d="M1 8.500l7-7 7 7" />
        </svg>
      </button>
      <svg viewBox="0 0 14 20" className="w-[14px] h-5 mr-6" fill="none" stroke="#2b6f80" strokeWidth="1.600">
        <rect x="4.200" y="1" width="5.600" height="11.500" rx="2.800" />
        <path d="M1 9q0 6.500 6 6.500T13 9M7 15.500V20" />
      </svg>
      <span className="text-lg leading-none mr-[22px]">英</span>
      <svg viewBox="0 0 20 16" className="w-5 h-4 mr-2.5" fill="none" stroke="currentColor" strokeWidth="1.500">
        <path d="M1 6q9-9 18 0M3.500 9q6.500-6.500 13 0M6.200 11.700q3.800-3.600 7.600 0" />
        <circle cx="10" cy="13.800" r="1.700" fill="currentColor" stroke="none" />
      </svg>
      <svg viewBox="0 0 20 18" className="w-5 h-[18px] mr-2.5" fill="none" stroke="currentColor" strokeWidth="1.400">
        <path d="M1 6.500h3.500L9 2.500v13l-4.500-4H1zM11.500 6q2 3 0 6M14 3.500q4 5.500 0 11M16.500 1.500q5.500 7.500 0 15" />
      </svg>
      <svg viewBox="0 0 20 18" className="w-5 h-[18px]" fill="none" stroke="currentColor" strokeWidth="1.500">
        <path d="M7 5h9q1.500 0 1.500 1.500v7q0 1.500-1.500 1.500H6q-1.500 0-1.500-1.500V11" />
        <path d="M7.500 7h8.500v6.500H6V10q1.500-1 1.500-3z" fill="currentColor" stroke="none" />
        <path d="M18 8h2v4h-2zM0 3h6.500v3q0 2-3.200 2.500Q0 8 0 6z" fill="currentColor" stroke="none" />
        <path d="M1.500 1v3M5 1v3M3.200 8v5" />
      </svg>
    </div>
  </div>
);

const App = () => {
  return (
    <div className="relative h-screen flex flex-col overflow-hidden bg-white text-[#111114] [font-family:'Open_Sans','Noto_Sans_CJK_SC',sans-serif]">
      <Header />
      <div className="flex-1 min-h-0 flex">
        <Workspace />
        <FormatPanel />
      </div>
      <Taskbar />
      <UploadBadge />
      <ColorPicker />
    </div>
  );
};

export default App;
